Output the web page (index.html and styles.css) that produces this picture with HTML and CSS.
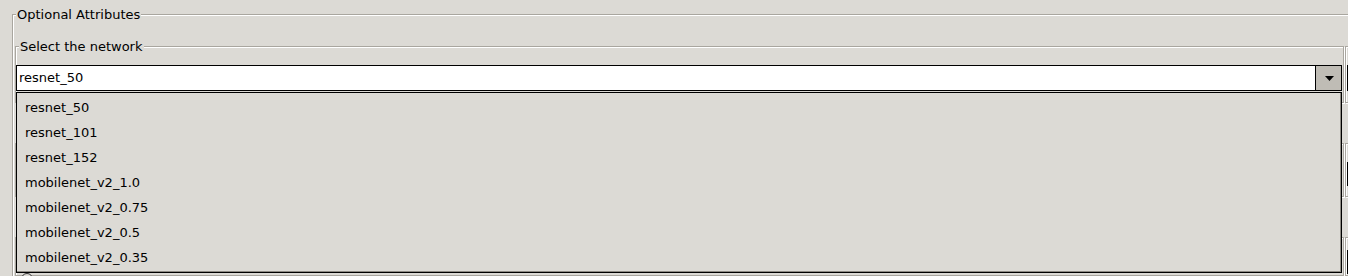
FILE: index.html
```html
<!DOCTYPE html>
<html lang="en">
<head>
<meta charset="utf-8">
<title>Optional Attributes</title>
<link rel="stylesheet" href="styles.css">
</head>
<body>
<div class="outer">
  <span class="lbl">Optional Attributes</span>
  <div class="grid">
    <div class="lf">
      <span class="lbl">Select the network</span>
      <div class="combo">
        <span class="field">resnet_50</span>
        <span class="arrow"><svg width="9" height="5" viewBox="0 0 9 5"><polygon points="0,0 9,0 4.5,5" fill="#000"/></svg></span>
        <ul class="list">
          <li>resnet_50</li>
          <li>resnet_101</li>
          <li>resnet_152</li>
          <li>mobilenet_v2_1.0</li>
          <li>mobilenet_v2_0.75</li>
          <li>mobilenet_v2_0.5</li>
          <li>mobilenet_v2_0.35</li>
        </ul>
      </div>
    </div>
    <div class="lf side r1"><div class="box tall"></div></div>
    <div class="lf"></div>
    <div class="lf side r2"><div class="box"></div></div>
    <div class="lf"><span class="radio"></span></div>
    <div class="lf side r3"><div class="box"></div></div>
  </div>
</div>
</body>
</html>
```

FILE: styles.css
```css
html, body {
  margin: 0;
  width: 1348px;
  height: 276px;
  overflow: hidden;
  background: #dcdad5;
  font-family: "DejaVu Sans", "Noto Sans", sans-serif;
  font-size: 13px;
  color: #000;
}

.outer {
  box-sizing: border-box;
  margin: 14px 0 0 12px;
  width: 1336px;
  height: 262px;
  border-left: 1px solid #a9a69f;
  border-top: 1px solid #a9a69f;
  box-shadow: inset 1px 1px 0 #fff;
}

.lbl {
  display: block;
  width: max-content;
  margin: -8px 0 0 3px;
  padding: 0 1px;
  line-height: 16px;
  height: 16px;
  background: #dcdad5;
  white-space: nowrap;
}

.grid {
  box-sizing: border-box;
  display: grid;
  grid-template-columns: 1329px 3px;
  grid-template-rows: 57px 54px 39px;
  column-gap: 1px;
  row-gap: 40px;
  height: 239px;
  padding-top: 9px;
  overflow: hidden;
  margin: 14px 0 0 2px;
}

.lf {
  box-sizing: border-box;
  border: 1px solid #a9a69f;
  box-shadow: inset 1px 1px 0 #fff, 1px 1px 0 #fff;
  min-width: 0;
}

.side {
  border-right: none;
}

.combo {
  position: relative;
  display: flex;
  box-sizing: border-box;
  height: 26px;
  margin: 10px 1px 0 0;
  border: 1px solid #000;
  background: #fff;
}

.field {
  flex: 1;
  padding-left: 2px;
  line-height: 24px;
  white-space: nowrap;
}

.arrow {
  box-sizing: border-box;
  width: 26px;
  border-left: 1px solid #000;
  background: #bfbcb5;
  display: flex;
  align-items: center;
  justify-content: center;
}

.arrow svg {
  display: block;
  margin-left: 1px;
}

.list {
  position: absolute;
  top: 26px;
  left: -1px;
  width: calc(100% + 2px);
  box-sizing: border-box;
  height: 181px;
  margin: 0;
  padding: 2px 0;
  list-style: none;
  background: #dcdad5;
  border: 1px solid #000;
  box-shadow: inset -1px -1px 0 #8e8b84;
  z-index: 5;
}

.list li {
  height: 25px;
  line-height: 25px;
  padding-left: 8px;
  white-space: nowrap;
}

.side .box {
  box-sizing: border-box;
  height: 24px;
  margin-left: 1px;
  border: 1px solid #000;
  border-right: none;
  background: #fff;
}

.side .box.tall {
  height: 26px;
}

.r1 { padding-top: 18px; }
.r2 { padding-top: 18px; }
.r3 { padding-top: 12px; }

.radio {
  display: block;
  width: 10px;
  height: 10px;
  margin: 35px 0 0 5px;
  border: 1px solid #333;
  border-radius: 50%;
  background: #dcdad5;
}
```
